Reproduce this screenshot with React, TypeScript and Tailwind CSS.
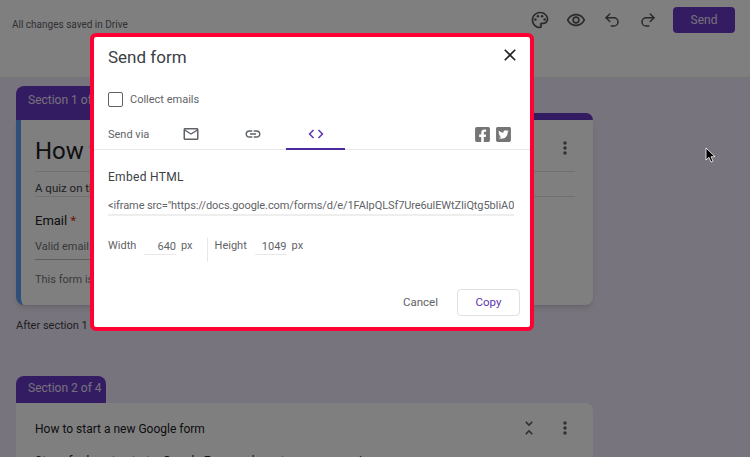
import { MdClose, MdCode, MdLink, MdMailOutline, MdMoreVert, MdOutlinePalette, MdOutlineRemoveRedEye, MdUnfoldLess } from 'react-icons/md'
import { FaFacebookSquare, FaTwitterSquare } from 'react-icons/fa'
import { Redo2, Undo2 } from 'lucide-react'

function SectionTab({ label, className }: { label: string; className: string }) {
  return (
    <div className={`bg-[#6838c4] rounded-t-lg text-[#e8e0f8] text-[12px] pl-3 pb-[3px] flex items-center ${className}`}>
      {label}
    </div>
  )
}

function SizeField({ label, value, labelWidth }: { label: string; value: string; labelWidth: string }) {
  return (
    <div className="flex items-start text-[11px] leading-4 text-[#5f6368]">
      <span className={labelWidth}>{label}</span>
      <span className="w-8 mt-[2px] border-b border-[#e8e8e8] text-right leading-[14px]">{value}</span>
      <span className="ml-[5px]">px</span>
    </div>
  )
}

function FormPage() {
  return (
    <div className="h-full bg-[#f0e9fa] text-[#202124]">
      <header className="h-[78px] bg-white border-b border-[#e8e8e8] flex items-start pl-3 pr-[15px]">
        <span className="text-[10px] text-[#5f6368] mt-[17px]">All changes saved in Drive</span>
        <div className="ml-auto flex items-center pt-[7px]">
          <div className="flex items-center gap-4 text-[#4f5357]">
            <MdOutlinePalette size={20} />
            <MdOutlineRemoveRedEye size={20} />
            <Undo2 size={18} className="mx-px" />
            <Redo2 size={18} className="mx-px" />
          </div>
          <button className="ml-[15px] w-[62px] h-[26px] rounded bg-[#6838c4] text-[#e8e0f8] text-[12px]">Send</button>
        </div>
      </header>

      <section className="ml-4 w-[577px] mt-2">
        <SectionTab label="Section 1 of 4" className="w-[200px] h-[30px]" />
        <div className="bg-[#6838c4] h-[7px] -mt-[3px] rounded-tr-lg" />
        <div className="h-[185px] bg-white border-l-[5px] border-[#5a9ff0] rounded-b-lg shadow-md pl-3.5 pr-[18px]">
          <div className="h-[52px] border-b border-[#e0e0e0] flex items-start justify-between pt-[15px]">
            <span className="text-[24px] leading-8">How to use Google Forms</span>
            <MdMoreVert size={20} className="text-[#5f6368] mt-[3px]" />
          </div>
          <p className="h-[25px] border-b border-[#e0e0e0] text-[11.5px] leading-[32px] text-[#3c4043]">A quiz on the basics of making forms</p>
          <p className="text-[13px] mt-3.5">Email <span className="text-[#d93025]">*</span></p>
          <p className="text-[11px] text-[#70757a] mt-2 pb-1 border-b border-[#bdbdbd] w-[200px]">Valid email address</p>
          <p className="text-[11px] text-[#70757a] mt-[12px]">This form is collecting emails.</p>
        </div>
      </section>

      <p className="ml-4 mt-[13px] text-[11px] text-[#3c4043]">After section 1 Continue to next section</p>

      <section className="ml-4 w-[577px] mt-[41px]">
        <SectionTab label="Section 2 of 4" className="w-[90px] h-[27px]" />
        <div className="h-[80px] bg-white rounded-tr-lg flex items-start pl-[19px] pr-[18px] pt-[19px]">
          <div className="text-[12px] leading-[14px]">
            <p>How to start a new Google form</p>
            <p className="mt-[18px]">Steps for how to start a Google Form and create your own quiz</p>
          </div>
          <MdUnfoldLess size={20} className="ml-auto text-[#5f6368] mr-4 -mt-1" />
          <MdMoreVert size={20} className="text-[#5f6368] -mt-1" />
        </div>
      </section>
    </div>
  )
}

function SendDialog() {
  return (
    <div className="absolute left-[90px] top-[33px] w-[444px] h-[298px] bg-white border-4 border-[#ff0033] rounded-md flex flex-col">
      <div className="flex items-center justify-between pl-3.5 pr-[10px] pt-[7px]">
        <h2 className="text-[17px] leading-[26px] text-[#3c4043]">Send form</h2>
        <MdClose size={20} className="text-[#202124] -mt-1" />
      </div>
      <label className="flex items-center gap-[7px] pl-3.5 mt-[21px]">
        <span className="w-[15px] h-[15px] border-[1.5px] border-[#5f6368] rounded-[2px]" />
        <span className="text-[11px] text-[#5f6368] pt-px">Collect emails</span>
      </label>
      <div className="h-[40px] mt-[1px] border-b border-[#e8e8e8] flex items-stretch pl-3.5 pr-[18px]">
        <span className="w-[52px] text-[11px] text-[#5f6368] flex items-center pt-[12px]">Send via</span>
        <div className="w-[62px] flex justify-center pt-[15px] text-[#5f6368]"><MdMailOutline size={18} /></div>
        <div className="w-[62px] flex justify-center pt-[15px] text-[#5f6368]"><MdLink size={18} /></div>
        <div className="w-[59px] ml-[2px] flex justify-center pt-[15px] text-[#5e35b1] border-b-2 border-[#4a2a9c] h-[40px]"><MdCode size={18} /></div>
        <div className="ml-auto flex gap-[4px] pt-[16px] text-[#757575]">
          <FaFacebookSquare size={17} />
          <FaTwitterSquare size={17} />
        </div>
      </div>
      <div className="pl-3.5 pr-4 pt-[19px]">
        <h3 className="text-[12px] leading-4 tracking-[0.3px] text-[#3c4043]">Embed HTML</h3>
        <div className="mt-[13px] border-b-2 border-[#eeeeee] text-[11px] leading-[16px] tracking-[-0.1px] text-[#5f6368] overflow-hidden whitespace-nowrap">
          &lt;iframe src="https://docs.google.com/forms/d/e/1FAIpQLSf7Ure6ulEWtZIiQtg5bIiA0
        </div>
        <div className="flex items-start mt-[22px] h-6">
          <SizeField label="Width" value="640" labelWidth="w-9" />
          <div className="w-px h-6 bg-[#e8e8e8] ml-[14px] mr-[7px]" />
          <SizeField label="Height" value="1049" labelWidth="w-10" />
        </div>
      </div>
      <div className="mt-auto flex items-center justify-end pr-[10px] pb-[11px]">
        <span className="text-[11.5px] text-[#5f6368] mr-[19px] pt-px">Cancel</span>
        <button className="w-[63px] h-[27px] border border-[#e0e0e0] rounded text-[11.5px] text-[#5e35b1]">Copy</button>
      </div>
    </div>
  )
}

export default function App() {
  return (
    <div className="relative w-[750px] h-[457px] overflow-hidden font-['Roboto',sans-serif]">
      <FormPage />
      <div className="absolute inset-0 bg-black/50" />
      <SendDialog />
      <svg className="absolute left-[705px] top-[147px]" width="11" height="17" viewBox="0 0 11 17">
        <path d="M1 1v12l3-2.6 2 4.6 2-.9-2-4.4h4z" fill="#000" stroke="#fff" strokeWidth="0.8" />
      </svg>
    </div>
  )
}
